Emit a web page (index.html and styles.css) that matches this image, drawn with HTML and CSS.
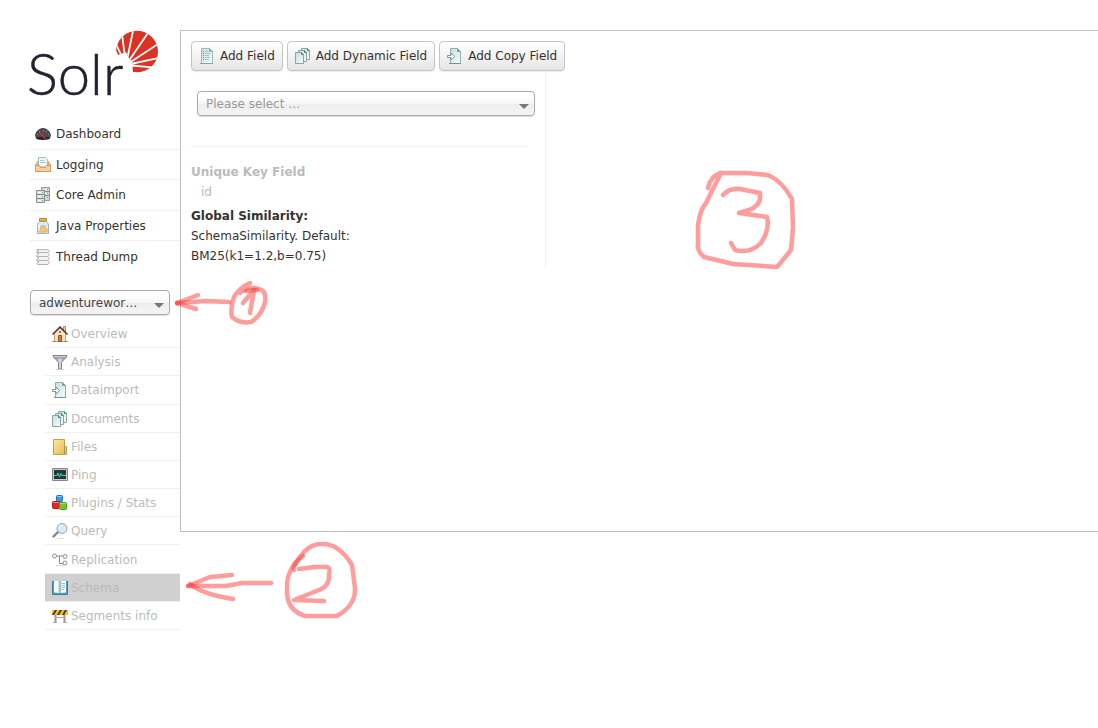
FILE: index.html
```html
<!DOCTYPE html>
<html lang="en">
<head>
<meta charset="utf-8">
<title>Solr Admin</title>
<link rel="stylesheet" href="styles.css">
</head>
<body>
<svg class="sprite" aria-hidden="true">
  <defs>
    <linearGradient id="paper" x1="0" y1="0" x2="1" y2="1"><stop offset="0" stop-color="#c3dcdc"/><stop offset="1" stop-color="#fafdfd"/></linearGradient>
    <linearGradient id="folder" x1="0" y1="0" x2="1" y2="1"><stop offset="0" stop-color="#ffe8a0"/><stop offset="1" stop-color="#e6b84e"/></linearGradient>
    <linearGradient id="metal" x1="0" y1="0" x2="1" y2="0"><stop offset="0" stop-color="#8d8d98"/><stop offset=".5" stop-color="#dcdce4"/><stop offset="1" stop-color="#80808a"/></linearGradient>
    <symbol id="i-dashboard" viewBox="0 0 16 16"><path d="M1.500 12.500Q-.5 8.500 2 5.500Q4.500 2.500 8 2.500Q11.500 2.500 14 5.500Q16.500 8.500 14.500 12.500Q8 14.500 1.500 12.500Z" fill="#4c4c52" stroke="#3a3a40"/><path d="M1.500 11.500Q8 10 14.500 11.500V13Q8 14.500 1.500 13Z" fill="#242429"/><path d="M2 8.500h1M4 5.500h1M8 4.500h1M11 5.500h1M13 8.500h1" stroke="#96969b"/><path d="M4 6L10.500 13" stroke="#e42828" stroke-width="1.200"/></symbol>
    <symbol id="i-logging" viewBox="0 0 16 16"><path d="M.5 8L3 4H13L15.500 8V14.500H.5Z" fill="#eab978" stroke="#d6a06a"/><path d="M3.500 .5H10.500L12.500 2.500V10H3.500Z" fill="#eef7f7" stroke="#9dbcbb"/><path d="M5 3.500h4M5 5.500h6" stroke="#a8c5c4"/><path d="M.5 8.500H4.500L5.500 10.500H10.500L11.500 8.500H15.500V14.500H.5Z" fill="#f5cfa2" stroke="#d39a60"/></symbol>
    <symbol id="i-cores" viewBox="0 0 16 16"><path d="M6.500 .5H14.500V13.500H6.500Z" fill="#d3d7da" stroke="#94999c"/><path d="M6 4.500h8M6 8.500h8" stroke="#868b8e"/><path d="M1.500 3.500H9.500V15.500H1.500Z" fill="#dcdfe1" stroke="#8c9194"/><path d="M2 7.500h7M2 11.500h7" stroke="#868b8e"/><path d="M3 5.500h3M3 9.500h3M3 13.500h3M10 2.500h2M10 6.500h2" stroke="#fff"/><path d="M7 5.500h1M7 9.500h1M7 13.500h1M12 2.500h1M12 6.500h1M12 10.500h1" stroke="#62b073"/></symbol>
    <symbol id="i-jar" viewBox="0 0 16 16"><path d="M4.500 3.500H11.500Q13.500 5 13.500 7V15.500H2.500V7Q2.500 5 4.500 3.500Z" fill="#d6ebf6" stroke="#9bb7c7"/><path d="M4.500 .5H11.500V3H4.500Z" fill="#edbd4b" stroke="#b9852c"/><path d="M6 8h4v3h2v3H4v-3h2Z" fill="#edca78" stroke="#d9b061"/><path d="M4 6V13" stroke="#fff"/></symbol>
    <symbol id="i-threads" viewBox="0 0 16 16"><g fill="#f3f3f3" stroke="#b4b4b4"><path d="M1.500 11.500L4 13L1.500 14.500Q2 15.500 4 15.500H13L14.500 13.500L12.500 11.500Z"/><path d="M1.500 7.500L4 9L1.500 10.500Q2 11.500 4 11.500H13L14.500 9.500L12.500 7.500Z"/><path d="M1.500 3.500L4 5L1.500 6.500Q2 7.500 4 7.500H13L14.500 5.500L12.500 3.500Z"/><path d="M1.500 .5L4 1.500L1.500 3Q2 3.500 4 3.500H13L14.500 2L12.500 .5Z"/></g></symbol>
    <symbol id="i-home" viewBox="0 0 16 16"><path d="M11.500 .5H13.500V6H11.500Z" fill="#e9d5b4" stroke="#b08a68"/><path d="M2.500 7L8 2L13.500 7V15.500H2.500Z" fill="#f4e4c5" stroke="#c9a179"/><path d="M.5 8.500L8 1L15.500 8.500" fill="none" stroke="#5b3425" stroke-width="1.500"/><path d="M6.500 9.500H9.500V15.500H6.500Z" fill="#dc7c32" stroke="#96501f"/><circle cx="8" cy="6" r="1" fill="#765139"/><path d="M0 15.500h4M12 15.500h4" stroke="#8f8a78"/></symbol>
    <symbol id="i-funnel" viewBox="0 0 16 16"><path d="M1.500 2.500L6.500 8.500V15H9.500V8.500L14.500 2.500Z" fill="url(#metal)" stroke="#85858f"/><path d="M1 1.500H15L14 4H2Z" fill="#c5cbe2" stroke="#85858f"/><path d="M4 15.500h8" stroke="#ccc"/></symbol>
    <symbol id="i-page" viewBox="0 0 16 16"><path d="M2.500 .5H10.500L13.500 3.500V15.500H2.500Z" fill="url(#paper)" stroke="#9db9b9"/><path d="M10.500 .5V3.500H13.500" fill="#8fadad" stroke="#8fadad"/><path d="M4 3.500h1M4 5.500h1M4 7.500h1M4 9.500h1M4 11.500h1" stroke="#6f8f8e"/><path d="M6 3.500h3M6 5.500h5M6 7.500h4M6 9.500h5M6 11.500h4" stroke="#a9c2c2"/><path d="M1 15.500h13" stroke="#8aa5a4"/></symbol>
    <symbol id="i-import" viewBox="0 0 16 16"><path d="M3.500 .5H10.500L13.500 3.500V15.500H3.500Z" fill="url(#paper)" stroke="#93b0af"/><path d="M10.500 .5V3.500H13.500" fill="#7fa09f" stroke="#7fa09f"/><path d="M.5 7.500H4V5L7.500 8.500L4 12V9.500H.5Z" fill="#fff" stroke="#7b9896"/><path d="M2 15.500h12" stroke="#78918f"/></symbol>
    <symbol id="i-docs" viewBox="0 0 16 16"><g fill="url(#paper)" stroke="#86a7a6"><path d="M6.500 .5H12.500L14.500 2.500V11.500H6.500Z"/><path d="M3.500 2.500H9.500L11.500 4.500V13.500H3.500Z"/><path d="M.5 4.500H6.500L8.500 6.500V15.500H.5Z"/></g><path d="M12.500 .5V2.500H14.500M9.500 2.500V4.500H11.500M6.500 4.500V6.500H8.500" fill="none" stroke="#547f7d"/></symbol>
    <symbol id="i-folder" viewBox="0 0 16 16"><path d="M1.500 .5H12.500V7.500H14.500V15.500H1.500Z" fill="url(#folder)" stroke="#c79d4c"/><path d="M12.500 7V15" stroke="#c2934a"/><path d="M12.500 12v2" stroke="#45a6aa"/></symbol>
    <symbol id="i-ping" viewBox="0 0 16 16"><path d="M.5 1.500H15.500V13.500H.5Z" fill="#c8c8cc" stroke="#86868c"/><path d="M2 3H14V12H2Z" fill="#26363c"/><path d="M2 8.500H5L6 6L7.500 10L9 6.500L10 8.500H14" fill="none" stroke="#45d9ac"/></symbol>
    <symbol id="i-plugins" viewBox="0 0 16 16"><rect x="4.500" y=".5" width="6" height="6" rx="1" fill="#3d9bdd" stroke="#286db0"/><rect x=".5" y="6.500" width="7" height="7" rx="1" fill="#df2828" stroke="#b01a26"/><rect x="7.500" y="7.500" width="7" height="7" rx="1" fill="#72c62f" stroke="#4b9a26"/><path d="M5 1.500h5M1 7.500h6M8 8.500h6" stroke="#fff" stroke-opacity=".4"/></symbol>
    <symbol id="i-query" viewBox="0 0 16 16"><path d="M1.500 13.500L6 9" stroke="#85858c" stroke-width="2.400" stroke-linecap="round"/><circle cx="10" cy="5.500" r="5" fill="#d6eafb" stroke="#97a3b3"/><path d="M7 5Q8 2 11 2" fill="none" stroke="#fff"/><path d="M5 15.500h7" stroke="#ddd"/></symbol>
    <symbol id="i-replication" viewBox="0 0 16 16"><path d="M4 4H11M7.500 4V11.500H11" fill="none" stroke="#8a8a8a"/><g fill="#fff" stroke="#8f8f8f"><circle cx="2.500" cy="4" r="2"/><circle cx="13" cy="4.500" r="2"/><circle cx="13" cy="11" r="2"/></g><path d="M4 13.500h8" stroke="#ddd"/></symbol>
    <symbol id="i-book" viewBox="0 0 16 16"><path d="M.5 1.500H15.500V14.500H.5Z" fill="#5a9cbd" stroke="#3b7b9b"/><path d="M2 1H7.500V13L2 12.500Z" fill="#eef8f6"/><path d="M8.500 1H14V12.500L8.500 13Z" fill="#f4fbfa"/><path d="M6.500 1V13" stroke="#cfe6e3"/><path d="M8 1V14" stroke="#86b0bd" stroke-width=".8"/><path d="M9.500 3.500H13M9.500 5.500H13M9.500 7.500H13M9.500 9.500H12" stroke="#9dbcc0"/></symbol>
    <symbol id="i-barrier" viewBox="0 0 16 16"><path d="M3.500 6V14M12.500 6V14" stroke="#98989d" stroke-width="2"/><path d="M3 9.500h10M1 14.500h4M11 14.500h4" stroke="#a6a6ab"/><path d="M0 2H16V7H0Z" fill="#f8bd22"/><path d="M0 7L3 2H5L2 7ZM5 7L8 2H10L7 7ZM10 7L13 2H15L12 7Z" fill="#393326"/></symbol>
  </defs>
</svg>

<div class="shell">
  <aside class="sidebar">
    <a class="logo" href="#" aria-label="Solr">
      <svg viewBox="0 0 130 70" role="img" aria-label="Solr">
        <defs><clipPath id="sun"><path d="M86 20A21 21 0 1 1 124 34A21 21 0 0 1 103 42L102 34L96 22L88 25Z"/></clipPath></defs>
        <text class="wordmark" x="-3" y="65">Solr</text>
        <g clip-path="url(#sun)">
          <circle cx="107" cy="21" r="21.500" fill="#db3323"/>
          <path d="M96 35L82 6M96 35L92 4M96 35L104 -4M96 35L120 0M96 35L131 12M96 35L133 27M96 35L129 38" stroke="#fff" stroke-width="1.800"/>
          <circle cx="94" cy="36" r="9" fill="#fff"/>
        </g>
      </svg>
    </a>
    <nav class="main-menu" aria-label="Main">
      <a href="#"><svg><use href="#i-dashboard"/></svg>Dashboard</a>
      <a href="#"><svg><use href="#i-logging"/></svg>Logging</a>
      <a href="#"><svg><use href="#i-cores"/></svg>Core Admin</a>
      <a href="#"><svg><use href="#i-jar"/></svg>Java Properties</a>
      <a href="#"><svg><use href="#i-threads"/></svg>Thread Dump</a>
    </nav>
    <div class="picker core-picker">
      <select aria-label="Core"><option>adwenturewor…</option></select>
    </div>
    <nav class="core-menu" aria-label="Core menu">
      <a href="#"><svg><use href="#i-home"/></svg>Overview</a>
      <a href="#"><svg><use href="#i-funnel"/></svg>Analysis</a>
      <a href="#"><svg><use href="#i-import"/></svg>Dataimport</a>
      <a href="#"><svg><use href="#i-docs"/></svg>Documents</a>
      <a href="#"><svg><use href="#i-folder"/></svg>Files</a>
      <a href="#"><svg><use href="#i-ping"/></svg>Ping</a>
      <a href="#"><svg><use href="#i-plugins"/></svg>Plugins / Stats</a>
      <a href="#"><svg><use href="#i-query"/></svg>Query</a>
      <a href="#"><svg><use href="#i-replication"/></svg>Replication</a>
      <a class="active" href="#"><svg><use href="#i-book"/></svg>Schema</a>
      <a href="#"><svg><use href="#i-barrier"/></svg>Segments info</a>
    </nav>
  </aside>

  <main class="content">
    <div class="actions">
      <button type="button"><svg><use href="#i-page"/></svg>Add Field</button>
      <button type="button"><svg><use href="#i-docs"/></svg>Add Dynamic Field</button>
      <button type="button"><svg><use href="#i-import"/></svg>Add Copy Field</button>
    </div>
    <section class="schema">
      <div class="picker field-picker">
        <select aria-label="Field"><option>Please select …</option></select>
      </div>
      <dl class="facts">
        <dt class="muted">Unique Key Field</dt>
        <dd class="muted key">id</dd>
        <dt>Global Similarity:</dt>
        <dd>SchemaSimilarity. Default:</dd>
        <dd>BM25(k1=1.2,b=0.75)</dd>
      </dl>
    </section>
  </main>
</div>

<svg class="notes" viewBox="0 0 1098 728" aria-hidden="true">
  <g class="ink">
    <path d="M177 303L198 295"/>
    <path d="M177 303L196 309"/>
    <path d="M177 303L206 301L229 302"/>
    <path d="M250 283Q240 287 234 297Q230 308 232 317Q240 324 251 322Q262 315 265 302Q267 291 259 289Q248 285 240 293"/>
    <path d="M243 303L254 290L250 313"/>
    <path d="M246 291L257 290"/>
    <path d="M188 586L210 577L232 575"/>
    <path d="M188 586L226 586L242 583L271 583"/>
    <path d="M190 584Q202 594 233 599"/>
    <path d="M303 556Q292 564 294 570"/>
    <path d="M295 565Q306 544 321 544Q339 543 352 565L355 588Q356 605 337 616L305 616Q286 610 287 589Q286 575 295 563"/>
    <path d="M299 569L314 567H326Q331 567 329 574Q330 586 319 590L294 600L324 601"/>
    <path d="M708 188Q710 177 720 173H747L768 175Q782 181 792 199L793 228L791 250L777 267L733 264L704 257Q697 251 698 244V225Q700 210 706 203L720 175"/>
    <path d="M723 195Q729 188 740 189L760 193Q762 205 749 210L739 213L767 217Q770 229 761 243Q750 254 735 250L731 243"/>
  </g>
</svg>
</body>
</html>
```

FILE: styles.css
```css
* {
  box-sizing: border-box;
}

body {
  margin: 0;
  background: #fff;
  color: #333;
  font: 12px/20px "DejaVu Sans", sans-serif;
}

.sprite {
  position: absolute;
  width: 0;
  height: 0;
}

.shell {
  display: flex;
  align-items: flex-start;
  padding: 30px 0 30px 30px;
}

.sidebar {
  flex: 0 0 150px;
}

.logo {
  display: block;
  width: 130px;
  margin-bottom: 19px;
}

.logo svg {
  display: block;
  width: 100%;
  height: 70px;
  overflow: visible;
}

.wordmark {
  fill: #252130;
  stroke: #252130;
  stroke-width: 0.5;
  font: 300 58px Lato, sans-serif;
}

.main-menu,
.core-menu {
  display: grid;
}

.main-menu {
  min-height: 152px;
  margin-bottom: 19px;
}

.main-menu a,
.core-menu a {
  display: flex;
  align-items: center;
  gap: 5px;
  padding: 1px 0 0 5px;
  border-bottom: 1px solid #f0f0f0;
  color: #333;
  text-decoration: none;
}

.main-menu a:last-child {
  border-bottom: 0;
}

.main-menu svg,
.core-menu svg,
.actions svg {
  flex: none;
  width: 16px;
  height: 16px;
}

.core-menu {
  min-height: 310px;
  margin: 5px 0 0 15px;
}

.core-menu a {
  gap: 3px;
  padding-left: 7px;
  color: #bbb;
}

.core-menu .active {
  background: #d0d0d0;
}

.picker {
  position: relative;
}

.picker::after {
  content: "";
  position: absolute;
  top: 13px;
  right: 6px;
  border: 5px solid transparent;
  border-top-color: #777;
  border-bottom: 0;
  pointer-events: none;
}

.picker select {
  display: block;
  width: 100%;
  height: 25px;
  padding: 1px 20px 0 8px;
  border: 1px solid #aaa;
  border-radius: 4px;
  background: linear-gradient(#fff 20%, #f6f6f6 50%, #eee 52%, #f4f4f4 100%);
  box-shadow: 0 1px 1px #ddd;
  color: #444;
  font: inherit;
  appearance: none;
}

.core-picker {
  width: 140px;
}

.content {
  flex: 1;
  min-width: 0;
  min-height: 502px;
  padding: 10px;
  border: 1px solid #c0c0c0;
  border-right: 0;
}

.actions {
  display: flex;
  gap: 4px;
}

.actions button {
  display: flex;
  align-items: center;
  gap: 5px;
  height: 30px;
  padding: 0 7px;
  border: 1px solid #c4c4c4;
  border-radius: 4px;
  background: linear-gradient(#fff, #e6e6e6);
  box-shadow: 0 1px 1px #eee;
  color: #333;
  font: inherit;
}

.schema {
  width: 355px;
  padding: 20px 17px 2px 0;
  border-right: 1px solid #f0f0f0;
}

.field-picker {
  margin: 0 -7px 30px 6px;
}

.field-picker select {
  color: #999;
}

.facts {
  margin: 0;
  padding-top: 15px;
  border-top: 1px solid #f0f0f0;
}

.facts dt {
  font-weight: bold;
}

.facts dd {
  margin: 0;
}

.facts .muted {
  color: #bbb;
}

.facts .key {
  margin: 0 0 4px 10px;
}

.notes {
  position: absolute;
  top: 0;
  left: 0;
  width: 1098px;
  height: 728px;
  pointer-events: none;
}

.ink {
  fill: none;
  stroke: #ff3c3c;
  stroke-opacity: .5;
  stroke-width: 4.5;
  stroke-linecap: round;
  stroke-linejoin: round;
}
```
